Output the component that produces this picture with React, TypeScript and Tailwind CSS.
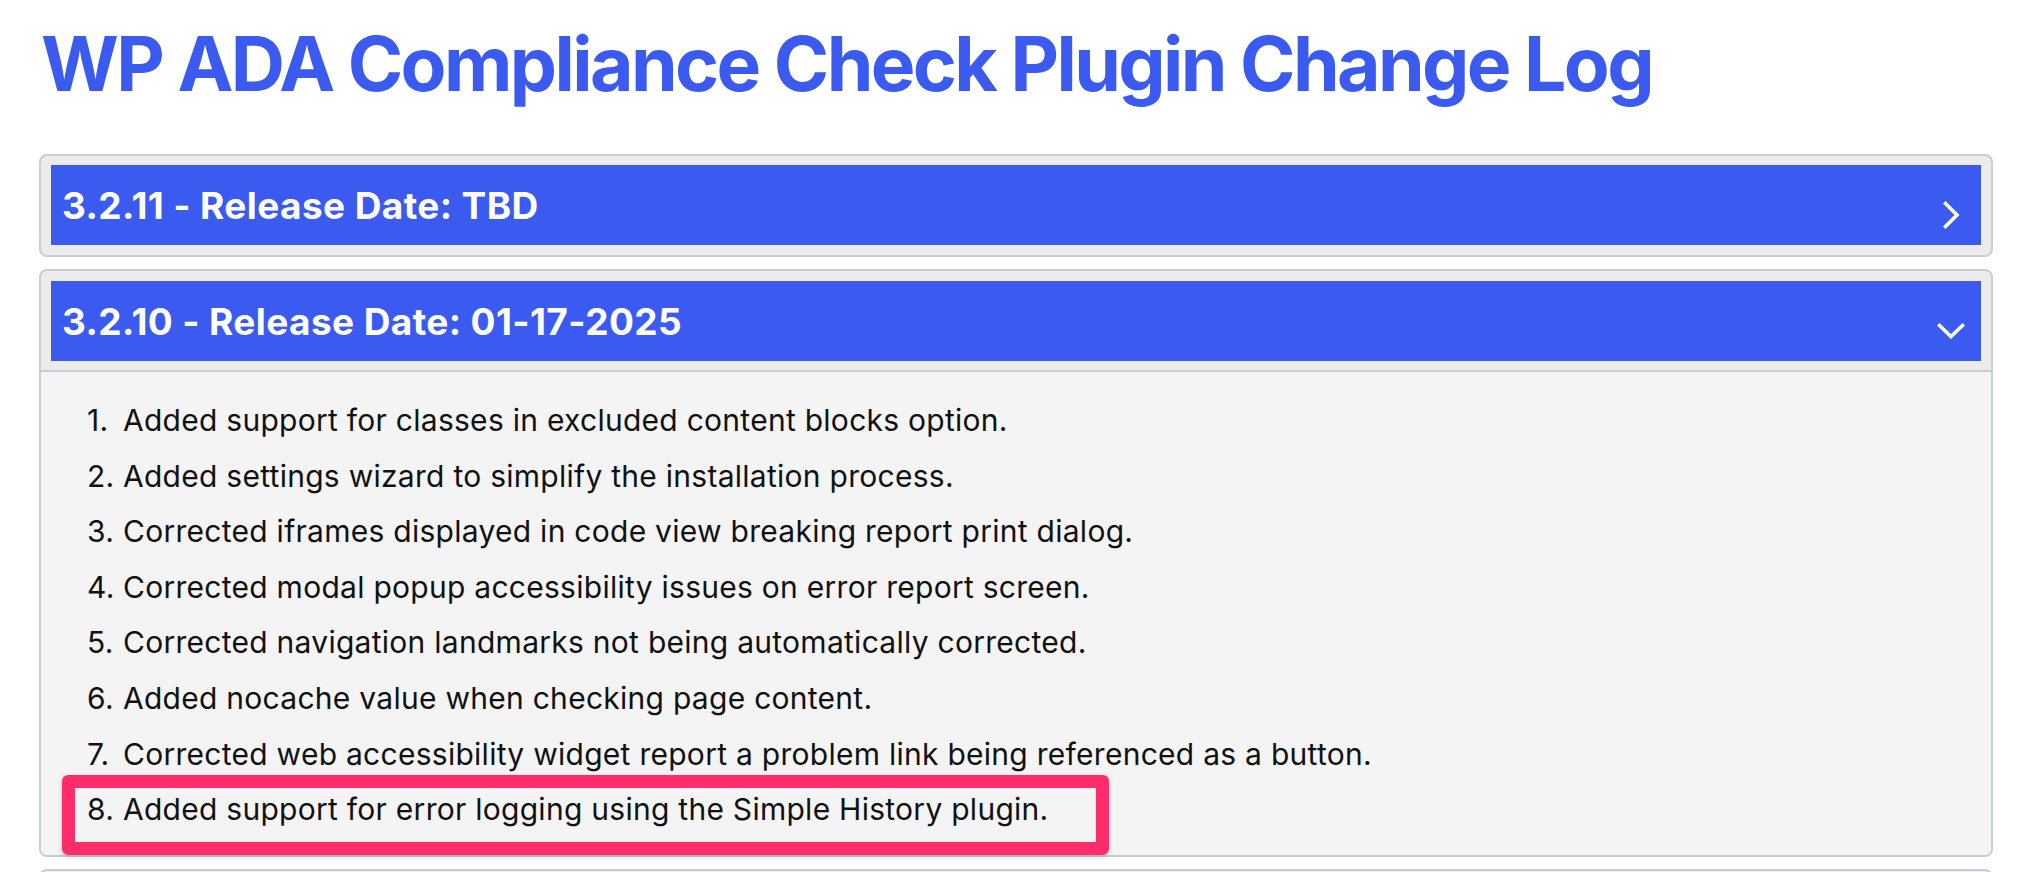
import React from "react";

const BLUE = "bg-[#3a5af0]";

const items = [
  "Added support for classes in excluded content blocks option.",
  "Added settings wizard to simplify the installation process.",
  "Corrected iframes displayed in code view breaking report print dialog.",
  "Corrected modal popup accessibility issues on error report screen.",
  "Corrected navigation landmarks not being automatically corrected.",
  "Added nocache value when checking page content.",
  "Corrected web accessibility widget report a problem link being referenced as a button.",
  "Added support for error logging using the Simple History plugin.",
];

function ChevronRight() {
  return (
    <svg width="28" height="28" viewBox="0 0 28 28" fill="none" className="mt-[20px] shrink-0">
      <polyline points="8.5,2.5 20,14 8.5,25.5" stroke="white" strokeWidth="3.6" strokeLinecap="square" strokeLinejoin="miter" />
    </svg>
  );
}

function ChevronDown() {
  return (
    <svg width="28" height="28" viewBox="0 0 28 28" fill="none" className="mt-[20px] shrink-0">
      <polyline points="2.5,8.5 14,19.5 25.5,8.5" stroke="white" strokeWidth="3.6" strokeLinecap="square" strokeLinejoin="miter" />
    </svg>
  );
}

function Header({ label, open }: { label: string; open: boolean }) {
  return (
    <button
      type="button"
      className={`${BLUE} h-[80px] w-full flex items-center justify-between pl-[11px] pr-[16px] text-left text-white`}
    >
      <span className="text-[37px] leading-none font-bold tracking-[0.4px]">{label}</span>
      {open ? <ChevronDown /> : <ChevronRight />}
    </button>
  );
}

export default function App() {
  return (
    <div
      className="min-h-screen bg-white px-[39px] pr-[25px]"
      style={{ fontFamily: "Inter, 'Noto Sans', sans-serif" }}
    >
      <h1 className="pt-[26px] pl-[2px] text-[75px] leading-[75px] font-bold text-[#3a5af0] tracking-[-2.6px]">
        WP ADA Compliance Check Plugin Change Log
      </h1>

      <div className="mt-[53px] flex flex-col gap-[12px]">
        {/* collapsed release */}
        <div className="rounded-[8px] border-2 border-[#c8ced3] bg-[#ececec] px-[10px] pt-[9px] pb-[10px]">
          <Header label="3.2.11 - Release Date: TBD" open={false} />
        </div>

        {/* expanded release */}
        <div className="rounded-[8px] border-2 border-[#c8ced3] bg-[#ececec]">
          <div className="px-[10px] pt-[10px] pb-[9px] border-b-2 border-[#c8ced3]">
            <Header label="3.2.10 - Release Date: 01-17-2025" open={true} />
          </div>
          <div className="bg-[#f4f4f4] rounded-b-[6px] pt-[21px] pb-[17px] pl-[46px]">
            <ol className="text-[30px] leading-[55.6px] text-[#111111] tracking-[0.27px]">
              {items.map((t, i) => (
                <li key={i} className="relative flex">
                  <span className="w-[36px] shrink-0">{i + 1}.</span>
                  <span>{t}</span>
                  {i === items.length - 1 && (
                    <span className="pointer-events-none absolute left-[-25px] top-[-7px] h-[80px] w-[1047px] rounded-[6px] border-[13px] border-[#fe2c6a] shadow-[0_2px_5px_rgba(0,0,0,0.18)]" />
                  )}
                </li>
              ))}
            </ol>
          </div>
        </div>

        {/* next release, below the fold */}
        <div className="rounded-[8px] border-2 border-[#c8ced3] bg-[#ececec] px-[10px] pt-[9px] pb-[10px]">
          <div className={`${BLUE} h-[80px] w-full`} />
        </div>
      </div>
    </div>
  );
}
